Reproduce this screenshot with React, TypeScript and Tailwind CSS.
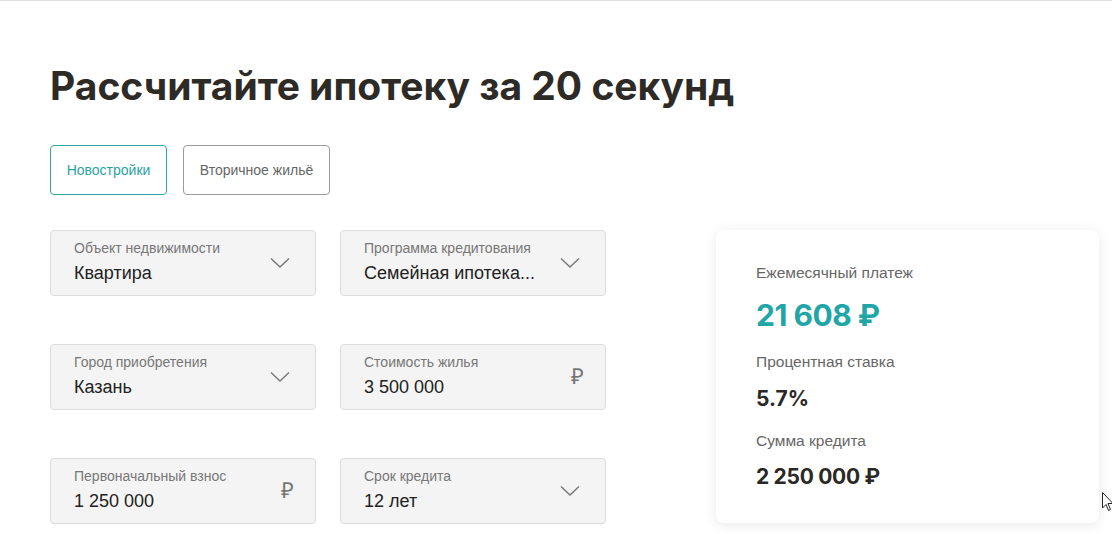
import React from "react";

const Chevron = () => (
  <svg width="20" height="12" viewBox="0 0 20 12" fill="none" className="shrink-0">
    <path d="M1 1.5 L10 10 L19 1.5" stroke="#777" strokeWidth="1.4" />
  </svg>
);

const Field = ({
  label,
  value,
  icon,
}: {
  label: string;
  value: string;
  icon: "chevron" | "rub";
}) => (
  <div className="flex h-[66px] w-[266px] items-center rounded-[4px] border border-[#dcdcdc] bg-[#f4f4f4] pl-[23px] pr-[25px]">
    <div className="flex min-w-0 flex-1 flex-col self-start pt-[8px]">
      <span className="text-[14px] leading-[18px] text-[#777]">{label}</span>
      <span className="mt-[5px] text-[18px] leading-[22px] text-[#222]">{value}</span>
    </div>
    {icon === "chevron" ? (
      <Chevron />
    ) : (
      <span className="mr-[-4px] text-[22px] font-light leading-none text-[#777]">₽</span>
    )}
  </div>
);

const heading = { fontFamily: 'Inter, "Noto Sans", sans-serif' };

export default function App() {
  return (
    <div
      className="relative h-[534px] w-[1112px] overflow-hidden border-t border-[#dedede] bg-white"
      style={{ fontFamily: '"Liberation Sans", Arial, sans-serif' }}
    >
      <div className="flex flex-col pl-[50px] pt-[61px]">
        <h1
          className="whitespace-nowrap text-[39px] font-bold leading-[48px] tracking-[0px] text-[#2e2b27]"
          style={heading}
        >
          Рассчитайте ипотеку за 20 секунд
        </h1>
        <div className="mt-[35px] flex gap-[16px]">
          <button className="h-[50px] w-[117px] rounded-[4px] border border-[#2aa8a8] text-[14px] text-[#2aa3a3]">
            Новостройки
          </button>
          <button className="h-[50px] w-[147px] rounded-[4px] border border-[#9a9a9a] text-[14px] text-[#666]">
            Вторичное жильё
          </button>
        </div>
        <div className="mt-[35px] flex items-start">
          <div className="grid grid-cols-[266px_266px] gap-x-[24px] gap-y-[48px]">
            <Field label="Объект недвижимости" value="Квартира" icon="chevron" />
            <Field label="Программа кредитования" value="Семейная ипотека..." icon="chevron" />
            <Field label="Город приобретения" value="Казань" icon="chevron" />
            <Field label="Стоимость жилья" value="3 500 000" icon="rub" />
            <div className="flex flex-col">
              <Field label="Первоначальный взнос" value="1 250 000" icon="rub" />
              <span className="mt-[6px] pl-[24px] text-[12px] text-[#999]">От 10% до 90%</span>
            </div>
            <Field label="Срок кредита" value="12 лет" icon="chevron" />
          </div>
          <div className="ml-[110px] flex h-[293px] w-[383px] flex-col rounded-[8px] bg-white pl-[40px] pt-[33px] shadow-[0_2px_14px_rgba(0,0,0,0.09)]">
            <span className="text-[15.5px] leading-[20px] text-[#666]">Ежемесячный платеж</span>
            <span
              className="mt-[13px] text-[30px] font-bold leading-[38px] tracking-[-0.5px] text-[#20a6a6]"
              style={heading}
            >
              21 608 ₽
            </span>
            <span className="mt-[18px] text-[15.5px] leading-[20px] text-[#666]">Процентная ставка</span>
            <span
              className="mt-[13px] text-[21px] font-bold leading-[28px] text-[#2b2925]"
              style={heading}
            >
              5.7%
            </span>
            <span className="mt-[18px] text-[15.5px] leading-[20px] text-[#666]">Сумма кредита</span>
            <span
              className="mt-[12px] text-[21px] font-bold leading-[28px] tracking-[-0.3px] text-[#2b2925]"
              style={heading}
            >
              2 250 000 ₽
            </span>
          </div>
        </div>
      </div>
      <svg
        className="absolute left-[1102px] top-[491px]"
        width="12"
        height="20"
        viewBox="0 0 12 20"
      >
        <path d="M0.5 0.5 L0.5 16 L4 12.5 L6.5 18.5 L8.5 17.5 L6 11.5 L11 11.5 Z" fill="white" stroke="#222" strokeWidth="1" />
      </svg>
    </div>
  );
}
